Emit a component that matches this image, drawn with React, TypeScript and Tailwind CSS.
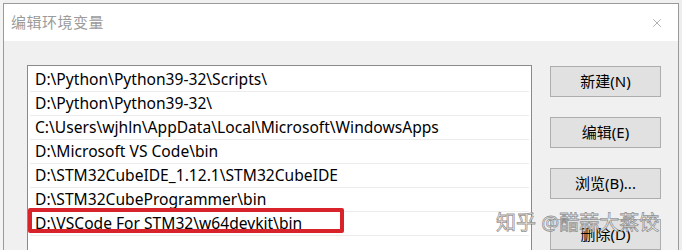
import { X } from 'lucide-react';

const paths = [
    'D:\\Python\\Python39-32\\Scripts\\',
    'D:\\Python\\Python39-32\\',
    'C:\\Users\\wjhln\\AppData\\Local\\Microsoft\\WindowsApps',
    'D:\\Microsoft VS Code\\bin',
    'D:\\STM32CubeIDE_1.12.1\\STM32CubeIDE',
    'D:\\STM32CubeProgrammer\\bin',
    'D:\\VSCode For STM32\\w64devkit\\bin',
];

const buttons = ['新建(N)', '编辑(E)', '浏览(B)...', '删除(D)'];

const font = 'font-["Noto_Sans","Noto_Sans_CJK_SC",sans-serif]';

export default function App() {
    return (
        <div className={`relative w-[682px] h-[250px] overflow-hidden bg-[#f0f0f0] flex ${font}`}>
            {/* Background window strip */}
            <div className="w-[3px] shrink-0 bg-[#f3f3f3]" />

            {/* Dialog */}
            <div className="mt-[3px] w-[676px] shrink-0 flex flex-col border-l border-t border-r border-[#9a9a9a] bg-[#f0f0f0]">
                {/* Title bar */}
                <div className="h-[37px] shrink-0 bg-white flex items-center justify-between pl-[7px] pr-[14px]">
                    <span className="text-[15px] text-[#9b9b9b] tracking-[0.5px]">编辑环境变量</span>
                    <X className="w-[14px] h-[14px] text-[#7a7a7a]" strokeWidth={1} />
                </div>

                {/* Body */}
                <div className="flex shrink-0 pt-[24px] pl-[23px]">
                    <div className="relative w-[505px] h-[200px] border border-[#8a8a8a] bg-white px-[2px] pt-[2px]">
                        {paths.map((p, i) => (
                            <div
                                key={p}
                                className="relative h-[24px] border-b border-[#ececec] pl-[5px] flex items-center text-[15.6px] text-black whitespace-nowrap"
                            >
                                {p}
                                {i === paths.length - 1 && (
                                    <div className="absolute left-[-2px] top-[-4px] w-[316px] h-[25px] border-[4px] border-[#d9232b] rounded-[2px]" />
                                )}
                            </div>
                        ))}
                    </div>

                    <div className="ml-[18px] flex flex-col gap-[20px] pt-px">
                        {buttons.map((b) => (
                            <button
                                key={b}
                                className="w-[111px] h-[31px] shrink-0 bg-[#e1e1e1] border border-[#adadad] text-[15px] text-black flex items-center justify-center"
                            >
                                {b}
                            </button>
                        ))}
                    </div>
                </div>
            </div>

            {/* Right strip */}
            <div className="flex-1 bg-[#ededed]" />

            {/* Watermark */}
            <div className="absolute left-[496px] top-[208px] text-[20px] text-white/90 [-webkit-text-stroke:0.8px_rgba(120,120,120,0.8)] whitespace-nowrap pointer-events-none">
                知乎 @醋蒜大蒸饺
            </div>
        </div>
    );
}
